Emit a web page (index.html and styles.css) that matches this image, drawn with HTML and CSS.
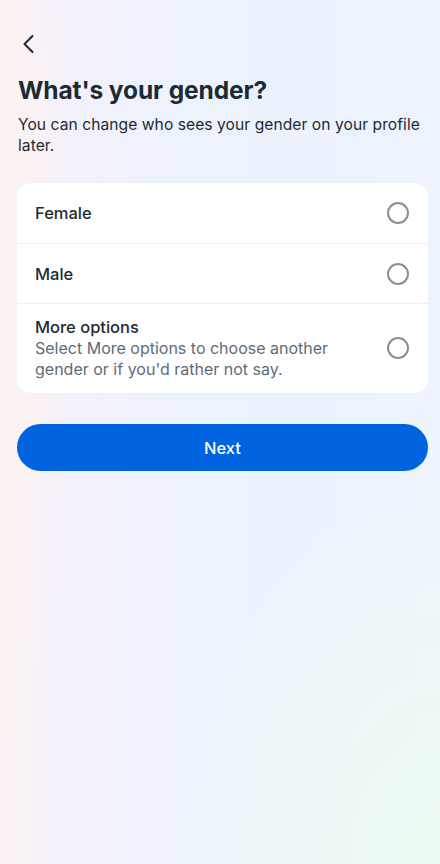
FILE: index.html
```html
<!DOCTYPE html>
<html lang="en">
<head>
    <meta charset="UTF-8">
    <meta name="viewport" content="width=device-width, initial-scale=1.0">
    <title>What's your gender?</title>
    <link rel="stylesheet" href="styles.css">
</head>
<body>
    <div class="screen">
        <button class="back" aria-label="Back">
            <svg width="16" height="20" viewBox="0 0 16 20" fill="none">
                <path d="M11.5 2L3.5 10L11.5 18" stroke="#1c2b33" stroke-width="2" stroke-linecap="round" stroke-linejoin="round"/>
            </svg>
        </button>

        <h1 class="title">What's your gender?</h1>
        <p class="subtitle">You can change who sees your gender on your profile later.</p>

        <div class="options">
            <label class="option">
                <div class="option-text">
                    <span class="option-label">Female</span>
                </div>
                <span class="radio"></span>
            </label>
            <label class="option">
                <div class="option-text">
                    <span class="option-label">Male</span>
                </div>
                <span class="radio"></span>
            </label>
            <label class="option option-tall">
                <div class="option-text">
                    <span class="option-label">More options</span>
                    <span class="option-desc">Select More options to choose another gender or if you'd rather not say.</span>
                </div>
                <span class="radio"></span>
            </label>
        </div>

        <button class="next">Next</button>
    </div>
</body>
</html>
```

FILE: styles.css
```css
html, body {
    height: 100%;
}
body {
    margin: 0;
    font-family: Inter, "Noto Sans", sans-serif;
    color: #1c2b33;
    background:
        radial-gradient(ellipse 60% 45% at 100% 100%, rgba(236, 250, 240, 1) 0%, rgba(236, 250, 240, 0) 100%),
        radial-gradient(ellipse 18% 60% at 0% 30%, rgba(253, 242, 240, 1) 0%, rgba(253, 242, 240, 0) 100%),
        linear-gradient(90deg, #fcf3f3 0%, #f4f0fb 12%, #edf2fc 35%, #ecf2fd 70%, #edf4fd 100%);
}
.screen {
    padding: 34px 12px 0 17px;
}
.back {
    display: block;
    padding: 0;
    margin: 0 0 0 2px;
    border: none;
    background: none;
    width: 20px;
    height: 22px;
    cursor: pointer;
}
.title {
    margin: 18px 0 0 1px;
    font-size: 24.5px;
    font-weight: 700;
    letter-spacing: -0.1px;
    line-height: 32px;
}
.subtitle {
    margin: 8px 0 0 1px;
    font-size: 15.6px;
    letter-spacing: 0.06px;
    line-height: 21px;
    color: #1c2b33;
}
.options {
    margin-top: 27px;
    background: #fff;
    border-radius: 14px;
    overflow: hidden;
}
.option {
    display: flex;
    align-items: center;
    justify-content: space-between;
    min-height: 60px;
    padding: 0 19px 0 18px;
    border-top: 1px solid #edf0f3;
    box-sizing: border-box;
    cursor: pointer;
}
.option:first-child {
    border-top: none;
}
.option-tall {
    min-height: 90px;
    padding-top: 11px;
    padding-bottom: 12px;
}
.option-text {
    display: flex;
    flex-direction: column;
    padding-right: 40px;
}
.option-label {
    font-size: 16.5px;
    font-weight: 500;
    line-height: 22px;
}
.option-desc {
    font-size: 16px;
    line-height: 21px;
    color: #5d6c77;
}
.radio {
    flex: none;
    width: 22px;
    height: 22px;
    border: 2px solid #8a8f94;
    border-radius: 50%;
    box-sizing: border-box;
}
.next {
    display: block;
    width: 100%;
    height: 47px;
    margin-top: 31px;
    border: none;
    border-radius: 24px;
    background-color: #0064e0;
    color: #fff;
    font-family: inherit;
    font-size: 16.5px;
    font-weight: 500;
    cursor: pointer;
}
```
